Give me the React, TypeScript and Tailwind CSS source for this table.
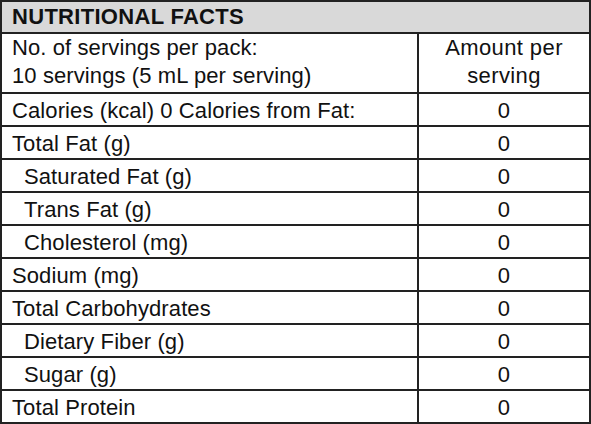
const rows: { label: string; value: string; indent?: boolean }[] = [
  { label: "Calories (kcal) 0 Calories from Fat:", value: "0" },
  { label: "Total Fat (g)", value: "0" },
  { label: "Saturated Fat (g)", value: "0", indent: true },
  { label: "Trans Fat (g)", value: "0", indent: true },
  { label: "Cholesterol (mg)", value: "0", indent: true },
  { label: "Sodium (mg)", value: "0" },
  { label: "Total Carbohydrates", value: "0" },
  { label: "Dietary Fiber (g)", value: "0", indent: true },
  { label: "Sugar (g)", value: "0", indent: true },
  { label: "Total Protein", value: "0" },
];

export default function App() {
  return (
    <div className="w-[591px] h-[424px] bg-white text-[#111] font-['Liberation_Sans',Arial,sans-serif] text-[22px] tracking-[0.1px]">
      <div className="border-2 border-[#222]">
        {/* title */}
        <div className="h-[30px] bg-[#d9d9d9] pl-[10px] pb-[1px] flex items-center font-bold tracking-[0.3px]">
          NUTRITIONAL FACTS
        </div>

        {/* servings header */}
        <div className="grid grid-cols-[417px_1fr] border-t-2 border-[#222] h-[60px]">
          <div className="border-r-2 border-[#222] pl-[10px] leading-[28px]">
            <div>No. of servings per pack:</div>
            <div>10 servings (5 mL per serving)</div>
          </div>
          <div className="text-center leading-[28px] tracking-[0.4px]">
            <div>Amount per</div>
            <div>serving</div>
          </div>
        </div>

        {rows.map((r) => (
          <div key={r.label} className="grid grid-cols-[417px_1fr] border-t-2 border-[#222] h-[33px]">
            <div className={`border-r-2 border-[#222] flex items-center ${r.indent ? "pl-[22px]" : "pl-[10px]"}`}>
              {r.label}
            </div>
            <div className="flex items-center justify-center">{r.value}</div>
          </div>
        ))}
      </div>
    </div>
  );
}
